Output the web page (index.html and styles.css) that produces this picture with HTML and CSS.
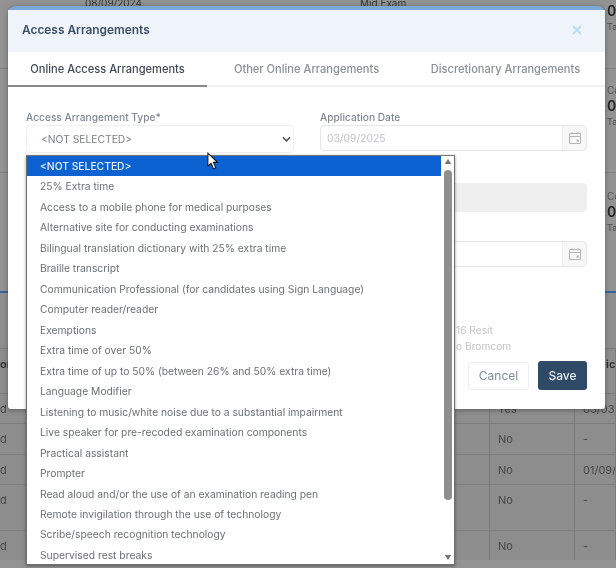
FILE: index.html
```html
<!DOCTYPE html>
<html lang="en">
<head>
<meta charset="utf-8">
<title>Access Arrangements</title>
<link rel="stylesheet" href="styles.css">
</head>
<body>
<div class="page">
  <div class="backdrop">
    <div class="stat-row stat-row-first">
      <span class="peek peek-date">08/09/2024</span>
      <span class="peek peek-mid">Mid Exam</span>
      <div class="stat"><b>0.</b><small>Ta</small></div>
    </div>
    <div class="stat-row stat-row-second">
      <div class="stat"><span>Co</span><b>0.</b><small>Ta</small></div>
    </div>
    <div class="stat-row stat-row-third">
      <div class="stat"><span>Co</span><b>0.</b><small>Ta</small></div>
    </div>
    <div class="band"></div>
    <div class="table">
      <div class="cell head">or</div><div class="cell head"></div><div class="cell head head-last">ica</div>
      <div class="cell r30">d</div><div class="cell r30 val">Yes</div><div class="cell r30 val">03/03/</div>
      <div class="cell r31">d</div><div class="cell r31 val">No</div><div class="cell r31 val">-</div>
      <div class="cell r30">d</div><div class="cell r30 val">No</div><div class="cell r30 val">01/09/</div>
      <div class="cell r46">d</div><div class="cell r46 val">No</div><div class="cell r46 val">-</div>
      <div class="cell r30">d</div><div class="cell r30 val">No</div><div class="cell r30 val">-</div>
    </div>
  </div>

  <section class="modal">
    <header class="modal-head">
      <h1 class="modal-title">Access Arrangements</h1>
      <svg class="close" viewBox="0 0 10 10" width="10" height="10"><path d="M1 1l8 8M9 1l-8 8"/></svg>
    </header>
    <nav class="tabs">
      <div class="tab active">Online Access Arrangements</div>
      <div class="tab">Other Online Arrangements</div>
      <div class="tab">Discretionary Arrangements</div>
    </nav>
    <div class="form">
      <div class="col">
        <label class="label">Access Arrangement Type*</label>
        <div class="select">
          <span>&lt;NOT SELECTED&gt;</span>
          <svg class="chevron" viewBox="0 0 10 6" width="9" height="6"><path d="M1 1l4 4 4-4"/></svg>
          <div class="dropdown">
            <ul class="options">
              <li class="selected">&lt;NOT SELECTED&gt;</li>
              <li>25% Extra time</li>
              <li>Access to a mobile phone for medical purposes</li>
              <li>Alternative site for conducting examinations</li>
              <li>Bilingual translation dictionary with 25% extra time</li>
              <li>Braille transcript</li>
              <li>Communication Professional (for candidates using Sign Language)</li>
              <li>Computer reader/reader</li>
              <li>Exemptions</li>
              <li>Extra time of over 50%</li>
              <li>Extra time of up to 50% (between 26% and 50% extra time)</li>
              <li>Language Modifier</li>
              <li>Listening to music/white noise due to a substantial impairment</li>
              <li>Live speaker for pre-recoded examination components</li>
              <li>Practical assistant</li>
              <li>Prompter</li>
              <li>Read aloud and/or the use of an examination reading pen</li>
              <li>Remote invigilation through the use of technology</li>
              <li>Scribe/speech recognition technology</li>
              <li>Supervised rest breaks</li>
            </ul>
            <div class="scrollbar">
              <svg viewBox="0 0 8 6" width="8" height="5" class="arrow"><path d="M4 0l4 6H0z"/></svg>
              <div class="thumb"></div>
              <svg viewBox="0 0 8 6" width="8" height="5" class="arrow"><path d="M0 0h8L4 6z"/></svg>
            </div>
          </div>
        </div>
      </div>
      <div class="col">
        <label class="label">Application Date</label>
        <div class="date">
          <span class="date-text">03/09/2025</span>
          <span class="date-btn">
            <svg viewBox="0 0 14 14" width="14" height="14"><path d="M1.5 2.5h11v10h-11zM1.5 5.5h11M4 1v2.500M10 1v2.500"/><rect x="8.500" y="8.500" width="2.500" height="2" class="fill"/></svg>
          </span>
        </div>
        <div class="grey-box"></div>
        <div class="date date-second">
          <span class="date-text"></span>
          <span class="date-btn">
            <svg viewBox="0 0 14 14" width="14" height="14"><path d="M1.5 2.5h11v10h-11zM1.5 5.5h11M4 1v2.500M10 1v2.500"/><rect x="8.500" y="8.500" width="2.500" height="2" class="fill"/></svg>
          </span>
        </div>
        <div class="checks">
          <div>16 Resit</div>
          <div class="check-second">o Bromcom</div>
        </div>
      </div>
    </div>
    <footer class="actions">
      <button class="btn btn-cancel">Cancel</button>
      <button class="btn btn-save">Save</button>
    </footer>
  </section>

  <svg class="cursor" viewBox="0 0 12 19" width="11" height="18"><path d="M1 1v14l3.500-3 2.500 6 2.500-1-2.500-6h4.500z"/></svg>
</div>
</body>
</html>
```

FILE: styles.css
```css
* { box-sizing: border-box; }
html, body { margin: 0; padding: 0; }
body {
  width: 616px;
  height: 568px;
  overflow: hidden;
  font-family: Inter, "Noto Sans", sans-serif;
  background: #8f8f8f;
}
.page {
  position: relative;
  width: 616px;
  height: 568px;
  overflow: hidden;
  filter: blur(0.45px);
}

/* Dimmed page behind the dialog */
.backdrop { display: flex; flex-direction: column; height: 568px; background: #939393; color: #2e2e2e; }
.stat-row { position: relative; display: flex; padding-left: 607px; border-bottom: 1px solid #7e7e7e; font-size: 10px; white-space: nowrap; }
.stat-row-first { height: 69px; padding-top: 2px; }
.stat-row-second { height: 104px; padding-top: 14px; }
.stat-row-third { height: 120px; padding-top: 16px; border-bottom: 2px solid #34659c; }
.stat { display: flex; flex-direction: column; }
.stat span { font-size: 10px; line-height: 14px; color: #555; }
.stat b { font-size: 14px; line-height: 17px; font-weight: 600; color: #222; }
.stat small { font-size: 9px; line-height: 16px; color: #4d4d4d; }
.peek { position: absolute; top: -3px; font-size: 10px; color: #333; }
.peek-date { left: 85px; }
.peek-mid { left: 360px; }
.band { height: 55px; background: #8f8f8f; flex: none; }
.table { display: grid; grid-template-columns: 490px 85px 41px; font-size: 11px; color: #484848; background: #8d8d8d; }
.cell { border-top: 1px solid #7c7c7c; border-right: 1px solid #7c7c7c; padding-top: 7px; line-height: 16px; overflow: hidden; white-space: nowrap; }
.val { padding-left: 8px; }
.head { height: 45px; font-weight: 600; color: #2e2e2e; padding-top: 7px; }
.head-last { padding-left: 31px; }
.r30 { height: 30px; }
.r31 { height: 31px; }
.r46 { height: 46px; }

/* Dialog */
.modal {
  position: absolute;
  left: 8px;
  top: 6px;
  width: 597px;
  height: 403px;
  display: flex;
  flex-direction: column;
  background: #fff;
  border-top: 4px solid #7ba7d9;
  border-radius: 8px 8px 3px 3px;
  box-shadow: 0 1px 5px rgba(0, 0, 0, 0.35);
}
.modal-head { display: flex; justify-content: space-between; align-items: center; height: 42px; padding: 0 23px 3px 14px; background: #eff4fa; flex: none; }
.modal-title { margin: 0; font-size: 11.9px; font-weight: 600; color: #3d4f66; }
.close { fill: none; stroke: #bcdcf0; stroke-width: 2; }
.tabs { display: flex; height: 35px; border-bottom: 2px solid #f0f0f0; flex: none; }
.tab { flex: 1; display: flex; align-items: center; justify-content: center; font-size: 11.1px; font-weight: 500; color: #8a8f96; margin-bottom: -2px; border-bottom: 2px solid transparent; }
.tab.active { color: #3f4a55; border-bottom-color: #8a8a8a; }
.form { display: grid; grid-template-columns: 268px 267px; column-gap: 26px; padding: 23px 18px 0; flex: 1; }
.col { display: flex; flex-direction: column; min-width: 0; }
.label { height: 15px; font-size: 10.2px; line-height: 14px; font-weight: 500; color: #7f8994; }
.select { position: relative; display: flex; align-items: center; justify-content: space-between; height: 28px; padding: 0 1px 0 14px; margin-bottom: -3px; border: 1px solid #f0f0f0; border-radius: 4px; font-size: 10.3px; color: #7a7f86; }
.chevron { fill: none; stroke: #555; stroke-width: 1.800; margin-right: 1px; }
.date { display: flex; height: 26px; border: 1px solid #e6e6e6; border-radius: 4px; }
.date-text { flex: 1; padding-left: 6px; font-size: 10.3px; line-height: 24px; color: #c0c3c7; }
.date-btn { display: flex; align-items: center; justify-content: center; width: 24px; background: #f7f7f7; border-left: 1px solid #ececec; border-radius: 0 4px 4px 0; }
.date-btn svg { fill: none; stroke: #b5b8bb; stroke-width: 1; }
.date-btn .fill { fill: #b5b8bb; stroke: none; }
.grey-box { height: 29px; margin-top: 32px; background: #efefef; border-radius: 4px; }
.date-second { margin-top: 29px; }
.checks { margin-top: 56px; padding-left: 136px; font-size: 10.2px; line-height: 14px; color: #c3c3c3; white-space: nowrap; }
.check-second { margin-top: 2px; }
.actions { display: flex; justify-content: flex-end; align-items: center; gap: 9px; padding: 0 18px 19px; flex: none; }
.btn { font-family: inherit; font-size: 12px; border-radius: 3px; cursor: pointer; padding: 0; }
.btn-cancel { width: 61px; height: 28px; background: #fff; border: 1px solid #efefef; color: #7c8a99; }
.btn-save { width: 49px; height: 29px; background: #2e4a66; border: 0; color: #e9eef3; font-weight: 500; }

/* Native-looking open list */
.dropdown { position: absolute; left: -1px; top: 29px; width: 429px; height: 410px; display: flex; background: #fff; border: 1px solid #6f6f6f; border-top-color: #777; box-shadow: 0 1px 3px rgba(0, 0, 0, 0.4); overflow: hidden; z-index: 2; }
.options { flex: 1; min-width: 0; margin: 0; padding: 0; list-style: none; font-size: 10.3px; color: #6b6f75; }
.options li { height: 20.47px; padding: 0 0 0 13px; line-height: 20px; white-space: nowrap; }
.options .selected { background: #0d62d2; color: #e8f0fb; font-weight: 500; }
.scrollbar { width: 13px; display: flex; flex-direction: column; align-items: center; padding: 3px 0 4px; flex: none; }
.arrow { fill: #777; flex: none; }
.thumb { width: 8px; height: 330px; margin-top: 6px; margin-bottom: auto; background: #8f8f8f; border-radius: 4px; }
.cursor { position: absolute; left: 207px; top: 152px; fill: #fff; stroke: #111; stroke-width: 1.100; z-index: 3; }
```
